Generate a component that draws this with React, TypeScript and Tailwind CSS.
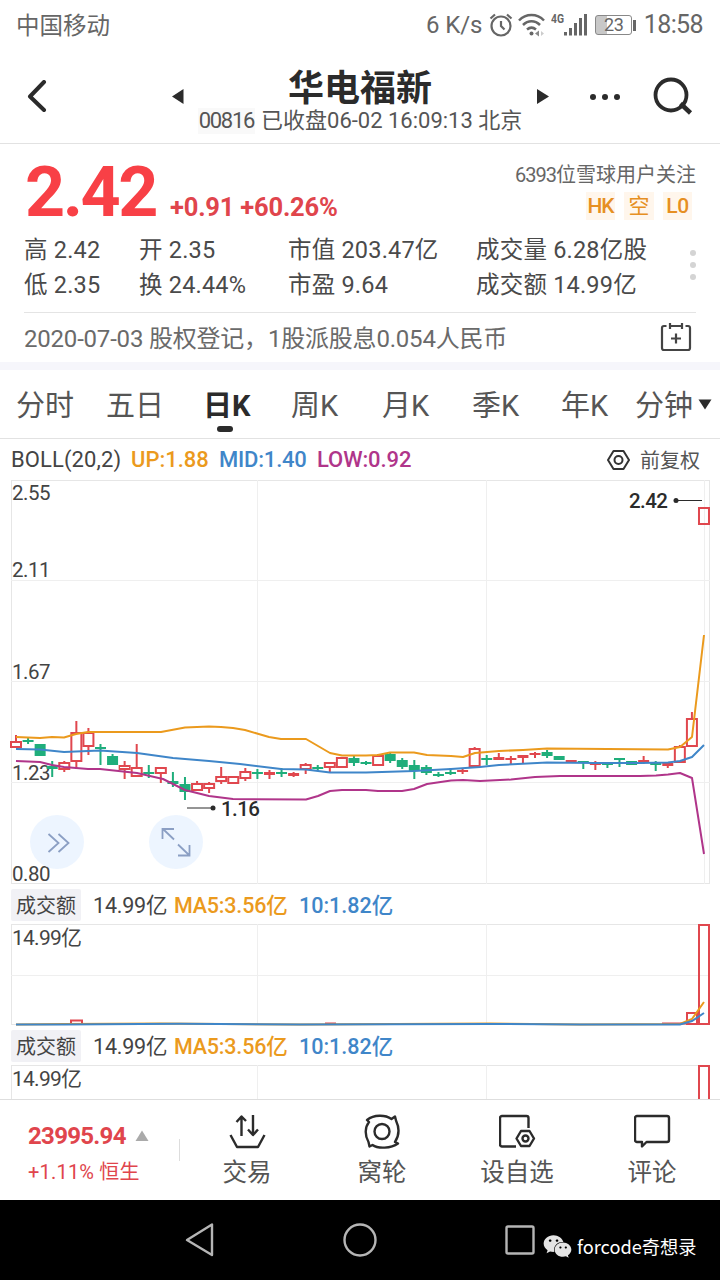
import React from 'react';
import { FaWeixin } from 'react-icons/fa';

type Candle = [up: number, high: number, top: number, bottom: number, low: number];
type Point = [number, number];

const RED = '#e0474e';
const GREEN = '#1fae7b';
const ORANGE = '#eb9a1d';
const BLUE = '#3f86c9';
const PURPLE = '#b0358a';

const candleX = (i: number) => 16 + i * 12.07;

const candles: Candle[] = [
  [1, 735, 741, 748, 748], [0, 737, 740, 742, 744], [0, 744, 744, 756, 756], [0, 761, 766, 769, 777],
  [1, 761, 762, 770, 772], [1, 721, 732, 762, 769], [1, 728, 732, 747, 755], [0, 744, 747, 749, 765],
  [0, 754, 756, 765, 765], [1, 761, 765, 770, 779], [1, 744, 767, 777, 777], [0, 765, 772, 774, 778],
  [1, 767, 767, 774, 783], [0, 772, 781, 784, 787], [0, 777, 784, 792, 800], [1, 781, 783, 791, 791],
  [1, 782, 783, 789, 793], [1, 767, 776, 782, 784], [1, 776, 776, 784, 784], [1, 768, 771, 779, 781],
  [0, 769, 772, 774, 779], [1, 770, 772, 775, 779], [0, 768, 772, 774, 777], [1, 772, 773, 776, 777],
  [1, 763, 764, 770, 774], [0, 765, 767, 769, 771], [1, 762, 762, 768, 772], [1, 757, 757, 768, 768],
  [0, 756, 758, 763, 766], [0, 761, 762, 764, 765], [1, 754, 755, 766, 766], [0, 752, 754, 761, 763],
  [0, 758, 760, 767, 769], [0, 760, 765, 771, 779], [0, 765, 767, 773, 775], [0, 772, 774, 776, 777],
  [0, 768, 772, 774, 775], [1, 769, 770, 772, 774], [1, 747, 748, 767, 767], [0, 755, 758, 760, 765],
  [1, 753, 757, 760, 760], [1, 756, 758, 760, 764], [1, 755, 755, 758, 764], [1, 752, 753, 755, 758],
  [0, 750, 752, 756, 758], [0, 756, 756, 760, 760], [1, 760, 760, 762, 762], [0, 761, 761, 763, 769],
  [1, 761, 762, 765, 770], [0, 762, 762, 765, 768], [0, 758, 758, 760, 767], [0, 761, 761, 765, 765],
  [1, 756, 760, 762, 764], [0, 761, 762, 765, 771], [1, 763, 763, 766, 768], [1, 745, 746, 763, 763],
  [1, 712, 718, 747, 747], [1, 507, 507, 525, 525],
];

const upper: Point[] = [
  [16, 737], [28, 737.5], [40, 738], [52, 737], [64, 737.5], [76, 734], [88, 732], [161, 732], [185, 727.5],
  [209, 726.5], [221, 727], [233, 728], [245, 730], [257, 733.5], [269, 737], [281, 739], [306, 739],
  [318, 746], [330, 753], [342, 755.5], [366, 755.5], [378, 755], [390, 752.5], [414, 752.5], [427, 755],
  [451, 756], [463, 757], [475, 753], [499, 751], [523, 750], [547, 748.5], [668, 749.5], [680, 747],
  [692, 737], [704, 635],
];

const middle: Point[] = [
  [16, 749], [40, 749.5], [64, 752], [100, 750.5], [137, 753], [173, 758], [209, 761], [240, 764],
  [281, 769], [306, 769.5], [330, 772.5], [366, 772.5], [414, 771], [451, 769], [480, 767], [499, 765],
  [547, 762.5], [595, 763], [640, 763], [668, 762.5], [680, 761], [692, 757], [704, 745],
];

const lower: Point[] = [
  [16, 761], [40, 762], [52, 765], [64, 767], [88, 769], [100, 769], [137, 773], [163, 779], [173, 784],
  [185, 790], [209, 796], [233, 799], [306, 799.5], [318, 796], [330, 791], [342, 790], [366, 790],
  [378, 791], [402, 791], [414, 789], [427, 784], [451, 780.5], [463, 780], [480, 781], [511, 779.5],
  [535, 777], [560, 776], [640, 776], [656, 775.5], [668, 774.5], [680, 773], [692, 778], [704, 854],
];

const toPoints = (pts: Point[]) => pts.map(p => p.join(',')).join(' ');

const axisLabels = [
  { text: '2.55', y: 500 },
  { text: '2.11', y: 577 },
  { text: '1.67', y: 679 },
  { text: '1.23', y: 780 },
  { text: '0.80', y: 881 },
];

const tabs = [
  { label: '分时', width: 'w-[90px]' },
  { label: '五日', width: 'w-[97px]' },
  { label: '日K', width: 'w-[88px]', active: true },
  { label: '周K', width: 'w-[91px]' },
  { label: '月K', width: 'w-[90px]' },
  { label: '季K', width: 'w-[89px]' },
  { label: '年K', width: 'w-[74px]' },
  { label: '分钟', width: 'w-[58px]' },
];

const StatusBar: React.FC = () => (
  <div className="flex h-[50px] items-center justify-between pl-[16px] pr-[17px] text-[#666] text-[23.5px]">
    <span className="pt-[3px]">中国移动</span>
    <div className="flex items-center">
      <span className="text-[24px] tracking-[-0.1px]">6 K/s</span>
      <svg className="ml-[7px]" width="24" height="24" viewBox="0 0 24 24" fill="none" stroke="#666" strokeWidth="2.2">
        <circle cx="12" cy="13" r="9.500" />
        <path d="M12 8v5l3.5 3.5M1.5 5.5L6 1.5M22.500 5.500L18 1.500" />
      </svg>
      <svg className="ml-[5px]" width="28" height="24" viewBox="0 0 28 24" fill="none" stroke="#666" strokeWidth="2.500">
        <path d="M1 7.500C8 .2 19 .2 26 7.500M5 12c5-5 12-5 17 0M9 16.500c3-2.500 6-2.500 9 0" />
        <circle cx="13.500" cy="20.500" r="2" fill="#666" stroke="none" />
        <path d="M21 17.500v6l-4-3z" fill="#888" stroke="none" />
        <path d="M23 18l3 2.500-3 2.500z" fill="#ccc" stroke="none" />
      </svg>
      <svg className="ml-[5px]" width="38" height="26" viewBox="0 0 38 26" fill="#666">
        <text x="0" y="11" fontSize="12" fontWeight="700" textLength="13" lengthAdjust="spacingAndGlyphs">4G</text>
        <rect x="13" y="20" width="3" height="3.500" />
        <rect x="18" y="16" width="3" height="7.500" />
        <rect x="23" y="11" width="3" height="12.500" />
        <rect x="28" y="6" width="3" height="17.500" />
        <rect x="33" y="2" width="3" height="21.500" />
      </svg>
      <div className="ml-[6px] flex h-[20px] w-[37px] items-center justify-center rounded-[3px] border-[1.500px] border-[#888] bg-linear-to-r from-[#c8c8c8] from-30% to-white to-30% text-[18px] leading-none tracking-[-0.500px]">
        23
      </div>
      <div className="ml-[1px] h-[11px] w-[2.500px] bg-[#666]" />
      <span className="ml-[8px] text-[25px] tracking-[-0.6px]">18:58</span>
    </div>
  </div>
);

const Header: React.FC = () => (
  <header className="flex h-[94px] items-center border-b border-[#e2e2e2] pl-[26px]">
    <svg width="22" height="34" viewBox="0 0 22 34" fill="none" stroke="#2b2b2b" strokeWidth="4" strokeLinecap="round" strokeLinejoin="round">
      <path d="M18 2L4 16.500L18 30" />
    </svg>
    <svg className="ml-[123px]" width="14" height="16" viewBox="0 0 14 16" fill="#2b2b2b">
      <path d="M1 7.500L12.500 0v15z" />
    </svg>
    <div className="ml-[10px] flex w-[330px] flex-col items-center pt-[4px]">
      <h1 className="h-[42px] pt-[5px] text-[36px] leading-[40px] font-bold text-[#2b2b2b]">华电福新</h1>
      <div className="flex gap-[6px] pt-[2px] text-[22px] leading-[26px] text-[#555] whitespace-nowrap">
        <span className="bg-[#f9f9f9] px-[1px] tracking-[-1.3px]">00816</span>
        <span>已收盘06-02 16:09:13 北京</span>
      </div>
    </div>
    <svg className="ml-[11px]" width="14" height="16" viewBox="0 0 14 16" fill="#2b2b2b">
      <path d="M13 7.500L1 0v15z" />
    </svg>
    <svg className="ml-[38px]" width="34" height="8" viewBox="0 0 34 8" fill="#2b2b2b">
      <circle cx="5" cy="4" r="3" />
      <circle cx="17" cy="4" r="3" />
      <circle cx="29" cy="4" r="3" />
    </svg>
    <svg className="ml-[30px]" width="42" height="40" viewBox="0 0 42 40" fill="none" stroke="#2b2b2b" strokeWidth="3.800">
      <circle cx="19" cy="18" r="15.500" />
      <path d="M28.500 26.500L38.500 36" strokeWidth="4.500" />
    </svg>
  </header>
);

const Stat: React.FC<{ label: string; value: string }> = ({ label, value }) => (
  <div className="h-[35px] text-[23.500px] leading-[35px] tracking-[0.2px] whitespace-nowrap">
    {label} {value}
  </div>
);

const Quote: React.FC = () => (
  <section className="h-[218px] px-[24px]">
    <div className="flex h-[88px] justify-between">
      <div className="flex items-baseline text-[#f84046]">
        <span className="w-[134px] pl-[1px] text-[70px] leading-[96px] font-bold tracking-[-2.5px]">2.42</span>
        <span className="ml-[12px] text-[25.500px] font-bold tracking-[-0.2px] text-[#e0454c]">+0.91 +60.26%</span>
      </div>
      <div className="flex flex-col items-end pt-[18px]">
        <span className="text-[20px] leading-[26px] text-[#666]"><span className="tracking-[-1px]">6393</span>位雪球用户关注</span>
        <div className="mt-[4px] mr-[4px] flex gap-[9px] text-[21px] leading-[28px] text-[#e68f22]">
          <span className="w-[29px] bg-[#fff6ec] text-center font-medium tracking-[-1px]">HK</span>
          <span className="w-[30px] bg-[#fff6ec] text-center">空</span>
          <span className="w-[29px] bg-[#fff6ec] text-center font-medium tracking-[-0.5px]">L0</span>
        </div>
      </div>
    </div>
    <div className="flex h-[80px] pt-px text-[#4a4a4a]">
      <div className="w-[115px]">
        <Stat label="高" value="2.42" />
        <Stat label="低" value="2.35" />
      </div>
      <div className="w-[149px]">
        <Stat label="开" value="2.35" />
        <Stat label="换" value="24.44%" />
      </div>
      <div className="w-[188px]">
        <Stat label="市值" value="203.47亿" />
        <Stat label="市盈" value="9.64" />
      </div>
      <div className="w-[214px]">
        <Stat label="成交量" value="6.28亿股" />
        <Stat label="成交额" value="14.99亿" />
      </div>
      <div className="flex flex-col gap-[6px] pt-[17px]">
        <i className="size-[6px] rounded-full bg-[#d4d4d4]" />
        <i className="size-[6px] rounded-full bg-[#d4d4d4]" />
        <i className="size-[6px] rounded-full bg-[#d4d4d4]" />
      </div>
    </div>
    <div className="flex h-[50px] items-center justify-between border-t border-[#e4e4e4]">
      <span className="pt-[2px] text-[24px] tracking-[-0.200px] text-[#6a6a6a]">2020-07-03 股权登记，1股派股息0.054人民币</span>
      <svg className="mr-[4px]" width="32" height="32" viewBox="0 0 32 32" fill="none" stroke="#444" strokeWidth="2.200">
        <path d="M6.500 4H4a2 2 0 0 0-2 2V26a2 2 0 0 0 2 2H28a2 2 0 0 0 2-2V6a2 2 0 0 0-2-2H25.500" />
        <path d="M10 1v6M22 1v6M10 4H22M16 11.500v10M11 16.500H21" />
      </svg>
    </div>
  </section>
);

const PeriodTabs: React.FC = () => (
  <nav className="flex h-[69px] border-b border-[#e2e2e2] pl-[16px] text-[29px] leading-[72px] text-[#555]">
    {tabs.map(tab => (
      <div key={tab.label} className={`${tab.width} flex flex-col items-start whitespace-nowrap ${tab.active ? 'font-bold text-[#2b2b2b]' : ''}`}>
        <span className="h-[56px]">{tab.label}</span>
        {tab.active && <i className="ml-[14px] h-[6px] w-[16px] rounded-[3px] bg-[#2b2b2b]" />}
      </div>
    ))}
    <svg className="mt-[29px] ml-[5px]" width="14" height="11" viewBox="0 0 14 11" fill="#2b2b2b">
      <path d="M.5 .5h13L7 10.500z" />
    </svg>
  </nav>
);

const BollLegend: React.FC = () => (
  <div className="flex h-[41px] items-center pl-[11px] text-[22px] text-[#444]">
    <span className="w-[120px] tracking-[0.1px]">BOLL(20,2)</span>
    <span className="w-[88px] font-medium text-[#eb9a1d]">UP:1.88</span>
    <span className="w-[98px] font-medium tracking-[-0.2px] text-[#3f86c9]">MID:1.40</span>
    <span className="w-[290px] font-medium tracking-[-0.1px] text-[#b0358a]">LOW:0.92</span>
    <svg width="23" height="20" viewBox="0 0 23 20" fill="none" stroke="#333" strokeWidth="2">
      <path d="M6.500 1h10L22 10l-5.500 9h-10L1 10z" strokeLinejoin="round" />
      <circle cx="11.500" cy="10" r="4" />
    </svg>
    <span className="ml-[10px] pt-[2px] text-[20px] text-[#555]">前复权</span>
  </div>
);

const PriceChart: React.FC = () => (
  <div className="h-[405px]">
    <svg className="block" width="720" height="405" viewBox="0 480 720 405" fill="none">
      <g stroke="#e6e6e6" shapeRendering="crispEdges">
        <path d="M11 480.500H710M11 883.500H710M11.500 480V884M709.500 480V884" />
        <path d="M11 580.500H710M11 681.500H710M11 782.500H710M257.500 480V884M486.500 480V884M704.500 480V884" stroke="#efefef" />
      </g>
      <g fill="#444" fontSize="20.500">
        {axisLabels.map(label => (
          <text key={label.text} x="12" y={label.y} textLength="38.500">{label.text}</text>
        ))}
      </g>
      {candles.map(([up, high, top, bottom, low], i) => {
        const x = candleX(i);
        const color = up ? RED : GREEN;
        const hollow = up && bottom - top > 3;
        return (
          <g key={i} stroke={color} strokeWidth="2">
            <path d={`M${x} ${high}V${top}M${x} ${bottom}V${low}`} />
            {hollow
              ? <rect x={x - 5} y={top + 1} width="10" height={bottom - top - 2} />
              : <rect x={x - 5.500} y={top} width="11" height={bottom - top} fill={color} stroke="none" />}
          </g>
        );
      })}
      <g strokeWidth="2" strokeLinejoin="round">
        <polyline points={toPoints(upper)} stroke={ORANGE} />
        <polyline points={toPoints(middle)} stroke={BLUE} />
        <polyline points={toPoints(lower)} stroke={PURPLE} />
      </g>
      <g fill="#2b2b2b" fontSize="20.500" fontWeight="500">
        <text x="629" y="508" textLength="39">2.42</text>
        <circle cx="676" cy="500.500" r="2.500" />
        <path d="M676 500.500H702" stroke="#2b2b2b" />
        <text x="221" y="816" textLength="39">1.16</text>
        <circle cx="213" cy="808" r="2.500" />
        <path d="M187 808H213" stroke="#2b2b2b" />
      </g>
      <g stroke="#8b9fc4" strokeWidth="1.800">
        <circle cx="57" cy="842" r="27" fill="#e8f3ff" fillOpacity="0.800" stroke="none" />
        <path d="M48.500 834l10 9-10 9M58.500 834l10 9-10 9" />
        <circle cx="176" cy="842" r="27" fill="#e8f3ff" fillOpacity="0.800" stroke="none" />
        <path d="M162.500 839V829H174M163 829l11 10.500M178 844.500l11 10.500M178 855.500H189.500V845" />
      </g>
    </svg>
  </div>
);

const VolumeLegend: React.FC = () => (
  <div className="flex h-[39px] items-center pt-px pl-[11px] text-[21.500px] text-[#444] whitespace-nowrap">
    <span className="h-[32px] w-[70px] rounded-[2px] bg-[#f1f1f5] text-center text-[20px] leading-[34px]">成交额</span>
    <span className="ml-[12px] w-[81px] pt-[2px] tracking-[-0.2px]">14.99亿</span>
    <span className="w-[125px] pt-[2px] font-medium tracking-[-0.2px] text-[#eb9a1d]">MA5:3.56亿</span>
    <span className="pt-[2px] font-medium text-[#3f86c9]">10:1.82亿</span>
  </div>
);

const VolumeChart: React.FC<{ height: number }> = ({ height }) => (
  <svg className="block shrink-0" width="720" height={height} viewBox={`0 924 720 ${height}`} fill="none">
    <g stroke="#e6e6e6" shapeRendering="crispEdges">
      <path d="M11 924.500H710M11 1024.500H710M11.500 924V1025M709.500 924V1025" />
      <path d="M11 975.500H710M257.500 924V1025M486.500 924V1025" stroke="#efefef" />
    </g>
    <text x="12" y="945" fill="#444" fontSize="21" textLength="70">14.99亿</text>
    <g stroke={RED} strokeWidth="2">
      <path d="M71 1024v-3.500h11v3.500M325 1023.500h11M662 1023.500h24" />
      <rect x="687" y="1013" width="10" height="11" />
      <rect x="699" y="925" width="10" height="99" />
    </g>
    <g strokeWidth="2">
      <path d="M16 1024.500L64 1024L160 1023.500L300 1024.500L490 1023.500L580 1024.500L680 1024L692 1019L704 1002" stroke={ORANGE} />
      <path d="M16 1024.500H64L180 1023.800L300 1024.500L490 1024L580 1024.500H680L692 1021L704 1013" stroke={BLUE} />
    </g>
  </svg>
);

const actions = [
  {
    label: '交易',
    icon: <path d="M12.500 22V2.500M7.500 8l5-5.500L17 7M24 1v19.500M19 15.500l5 5.500 5-5.500M1.500 21L8 33H29L35.500 21" />,
  },
  {
    label: '窝轮',
    icon: (
      <>
        <circle cx="18" cy="17.500" r="7.500" />
        <path d="M3 6C10 .5 21 .5 27.500 5L31 2.500L32 6.500C35.500 14 35 22 31 28L34 29.500C27 34.500 14 35 8.500 31L5.500 32.500L4.500 28C.5 21 1 13 5 8z" />
      </>
    ),
  },
  {
    label: '设自选',
    icon: (
      <>
        <path d="M17 32.500H3a2 2 0 0 1-2-2V4a2 2 0 0 1 2-2H27.500a2 2 0 0 1 2 2V14" />
        <path d="M22 17h8.500L35 24.500L30.500 32H22L17.500 24.500z" />
        <circle cx="26.500" cy="24.500" r="3" />
      </>
    ),
  },
  {
    label: '评论',
    icon: <path d="M3 2H33a2 2 0 0 1 2 2V26a2 2 0 0 1-2 2H12.500L8 32.500V28H3a2 2 0 0 1-2-2V4a2 2 0 0 1 2-2z" />,
  },
];

const BottomBar: React.FC = () => (
  <footer className="flex h-[101px] border-t border-[#dedede] bg-white">
    <div className="flex w-[180px] items-center">
      <div className="w-[179px] pt-[8px] pl-[28px] text-[#e0454c]">
        <div className="flex items-center text-[24px] leading-[36px] font-bold tracking-[-0.700px]">
          23995.94
          <svg className="ml-[9px]" width="14" height="12" viewBox="0 0 14 12" fill="#aaa">
            <path d="M7 .5L13.500 11H.5z" />
          </svg>
        </div>
        <div className="text-[20px] leading-[36px] tracking-[0.2px]">+1.11% 恒生</div>
      </div>
      <i className="h-[22px] w-px bg-[#ddd]" />
    </div>
    {actions.map(action => (
      <button key={action.label} className="flex w-[135px] flex-col items-center pt-[14px]">
        <svg width="38" height="36" viewBox="0 0 38 36" fill="none" stroke="#2b2b2b" strokeWidth="2.400" strokeLinejoin="round">
          {action.icon}
        </svg>
        <span className="mt-[5px] mr-[1px] text-[24.500px] leading-[36px] text-[#555]">{action.label}</span>
      </button>
    ))}
  </footer>
);

const SystemNav: React.FC = () => (
  <div className="relative flex h-[80px] items-center bg-black pl-[184px]">
    <svg width="352" height="36" viewBox="0 0 352 36" fill="none" stroke="#b5b5b5" strokeWidth="2.400" strokeLinejoin="round">
      <path d="M3 18L28 2.500V33z" />
      <circle cx="176" cy="18" r="15.500" />
      <rect x="322.500" y="4.500" width="27" height="27" rx="1.500" />
    </svg>
    {/* Account watermark */}
    <div className="absolute top-[31px] left-[543px] flex items-center text-white">
      <FaWeixin size={29} className="text-[#e4e4e4]" />
      <span className="ml-[5px] font-['Noto_Sans_CJK_SC',sans-serif] text-[18.200px] leading-[30px] whitespace-nowrap">forcode奇想录</span>
    </div>
  </div>
);

export default function App() {
  return (
    <div className="flex h-[1280px] w-[720px] flex-col overflow-hidden bg-white font-['Roboto','Noto_Sans_CJK_SC',sans-serif]" lang="zh-CN">
      <StatusBar />
      <Header />
      <Quote />
      <div className="h-[8px] bg-[#f6f6fb]" />
      <PeriodTabs />
      <BollLegend />
      <PriceChart />
      <VolumeLegend />
      <VolumeChart height={102} />
      <VolumeLegend />
      <VolumeChart height={34} />
      <BottomBar />
      <SystemNav />
    </div>
  );
}
